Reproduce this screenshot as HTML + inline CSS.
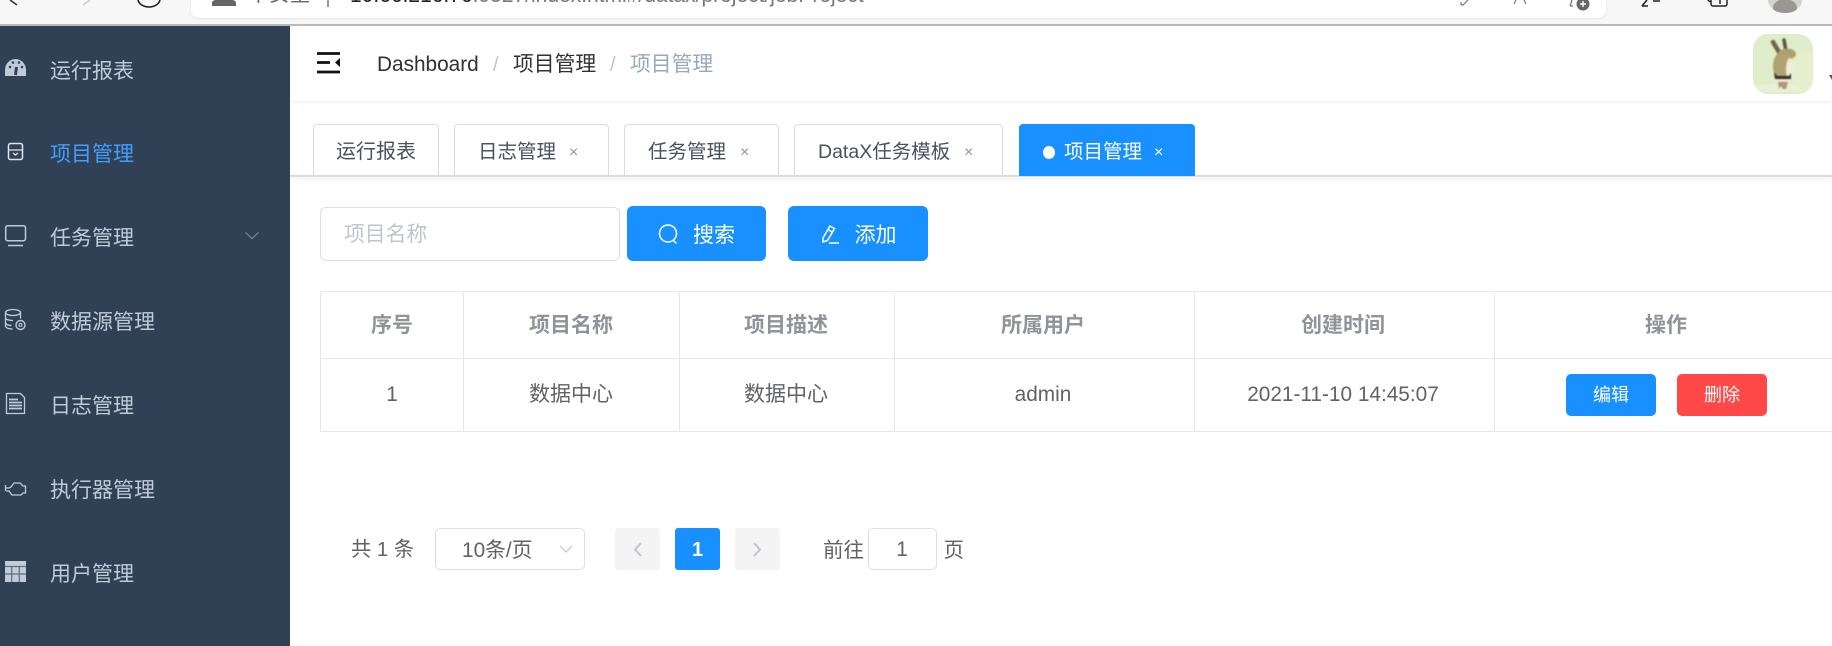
<!DOCTYPE html>
<html lang="zh"><head><meta charset="utf-8"><title>项目管理</title>
<style>
*{box-sizing:border-box}
html,body{margin:0;padding:0;width:1832px;height:646px;overflow:hidden;background:#fff}
body{position:relative;font-family:"Liberation Sans","Noto Sans CJK SC",sans-serif;font-size:21px;color:#606266}
.a,.t,.c{position:absolute;white-space:nowrap}
.t{line-height:30px;height:30px}
.c{line-height:30px;height:30px;text-align:center;transform:translateX(-50%)}
.m{color:#bfcbd9;left:50px}
.tab{position:absolute;top:124px;height:52px;background:#fff;border:1px solid #d8dce5;border-bottom:0;border-radius:4px 4px 0 0}
.tx{font-size:19.5px}
.x{color:#8f9399;font-size:16px}
.th{font-weight:bold;color:#909399;font-size:21px}
.vl{position:absolute;width:1px;top:292px;height:140px;background:#e4e7ed}
.btn{position:absolute;background:#1890ff;border-radius:4px}
svg{position:absolute;overflow:visible}
</style></head><body>

<!-- browser chrome -->
<div class="a" style="left:0;top:0;width:1832px;height:24px;background:#f7f7f7"></div>
<div class="a" style="left:0;top:24px;width:1832px;height:2px;background:#bcbcbc"></div>
<div class="a" style="left:191px;top:-10px;width:1415px;height:28px;background:#fff;border-radius:8px;box-shadow:0 1px 2px rgba(0,0,0,.08)"></div>
<svg style="left:0;top:0" width="1832" height="24" fill="none">
<path d="M10 0l7 5" stroke="#333" stroke-width="1.6"/>
<path d="M83 5l7-5" stroke="#ccc" stroke-width="1.6"/>
<path d="M138 -1a11 8 0 0 0 22 0" stroke="#222" stroke-width="1.6"/>
<path d="M212 6v-3c0-2 2-3 4-3h2l2-3h3l2 3h7c2 0 4 1 4 3v3z" fill="#666" stroke="none"/>
<path d="M328 -6v13" stroke="#777" stroke-width="1.5"/>
<path d="M1461 5h2l5-5M1461 5v-3" stroke="#777" stroke-width="1.2"/>
<path d="M1514 4l3-6M1526 4l-3-6" stroke="#777" stroke-width="1.2"/>
<path d="M1570 6h3M1570 6l2-6" stroke="#777" stroke-width="1.3"/>
<circle cx="1583" cy="4" r="6.500" fill="#666"/><path d="M1583 1v6M1580 4h6" stroke="#fff" stroke-width="1.4"/>
<path d="M1642 6l5-6M1642 6h6M1653 1h7" stroke="#222" stroke-width="1.6"/>
<path d="M1711 0v4a2 2 0 0 0 2 2h12a2 2 0 0 0 2-2v-4M1720 -1v5M1707 -1l3 3" stroke="#222" stroke-width="1.500"/>
<path d="M1768 0a17 13 0 0 0 34 0z" fill="#d3d3d0"/>
<path d="M1773 8a12 9 0 0 1 24 0a12 5 0 0 1-24 0z" fill="#9a9793"/>
</svg>
<div class="a" style="left:248px;top:-18px;font-size:20.800px;line-height:26px;color:#666">不安全</div>
<div class="a" style="left:350px;top:-17px;font-size:21px;line-height:26px;color:#777"><span style="color:#222">10.66.216.76</span>:9527/index.html#/datax/project/jobProject</div>

<!-- sidebar -->
<div class="a" style="left:0;top:26px;width:290px;height:620px;background:#304156"></div>
<div class="t m" style="top:57px">运行报表</div>
<div class="t m" style="top:140px;color:#409eff">项目管理</div>
<div class="t m" style="top:224px">任务管理</div>
<div class="t m" style="top:308px">数据源管理</div>
<div class="t m" style="top:392px">日志管理</div>
<div class="t m" style="top:476px">执行器管理</div>
<div class="t m" style="top:560px">用户管理</div>
<svg style="left:0;top:0" width="290" height="646" fill="none" stroke="#bfcbd9">
<!-- gauge -->
<path d="M5 76v-6a10.500 11 0 0 1 21 0v6z" fill="#bfcbd9" stroke="none"/>
<path d="M15.500 75l1-8" stroke="#304156" stroke-width="3"/>
<circle cx="10" cy="67" r="1.300" fill="#304156" stroke="none"/><circle cx="13" cy="62.500" r="1.300" fill="#304156" stroke="none"/><circle cx="19" cy="62.500" r="1.300" fill="#304156" stroke="none"/><circle cx="22" cy="67" r="1.300" fill="#304156" stroke="none"/>
<!-- box -->
<rect x="8.500" y="143.500" width="14" height="16" rx="2" stroke="#dfe5ec" stroke-width="1.500"/>
<path d="M9 150h13M13 153l2.500 2 2.500-2" stroke="#dfe5ec" stroke-width="1.300"/>
<!-- monitor -->
<rect x="5.700" y="225.700" width="19.800" height="15" rx="2" stroke-width="1.500"/>
<path d="M8 245.500h15" stroke-width="1.500"/>
<!-- db -->
<ellipse cx="13" cy="312.500" rx="7.500" ry="3" stroke-width="1.300"/>
<path d="M5.500 312.500v13.500c0 2 3.500 3 7 3M5.500 317.500c0 2 3.500 3 7.500 3M5.500 322.500c0 2 3 3 6 3M20.500 312.500v6" stroke-width="1.300"/>
<circle cx="20.500" cy="325" r="4.500" stroke-width="1.400"/><circle cx="20.500" cy="325" r="1.500" stroke-width="1.100"/>
<!-- doc -->
<path d="M6.500 393.500h14l4 4v16h-18z" stroke-width="1.300"/>
<path d="M9 399.500h9M9 402.500h13M9 405.500h13M9 408.500h13" stroke-width="1.700"/>
<!-- engine -->
<path d="M5.500 485v6M6 488h3l2-1 3-4h6l3 3h2.500v7h-2.500l-2 2h-9l-3-4h-3" stroke-width="1.300"/>
<!-- table -->
<path d="M5 561h21v21H5z" fill="#bfcbd9" stroke="none"/>
<path d="M5 566.500h21M5 574h21M11.700 566.500v15.500M19.300 566.500v15.500" stroke="#5f6f82" stroke-width="1.200"/>
<!-- chevron -->
<path d="M245.500 232.500l6.500 6 6.500-6" stroke="#7f8b99" stroke-width="1.100"/>
</svg>

<!-- header -->
<div class="a" style="left:290px;top:26px;width:1542px;height:75px;background:#fff;box-shadow:0 1px 4px rgba(0,21,41,.08)"></div>
<svg style="left:0;top:0" width="345" height="80">
<path d="M317 53.500h23M317 62.500h13M317 72h23" stroke="#111" stroke-width="2.800" fill="none"/>
<path d="M340 58v9l-5-4.500z" fill="#111"/>
</svg>
<div class="t" style="left:377px;top:50px;color:#303133;font-size:20.800px">Dashboard</div>
<div class="t" style="left:493px;top:50px;color:#c0c4cc;font-size:20px">/</div>
<div class="t" style="left:513px;top:50px;color:#303133;font-size:20.800px">项目管理</div>
<div class="t" style="left:610px;top:50px;color:#c0c4cc;font-size:20px">/</div>
<div class="t" style="left:630px;top:50px;color:#97a8be;font-size:20.800px">项目管理</div>
<!-- avatar -->
<div class="a" style="left:1753px;top:34px;width:60px;height:60px;border-radius:15px;background:#e0edca;overflow:hidden">
<svg style="left:0;top:0;filter:blur(.7px)" width="60" height="60">
<rect x="40" y="18" width="20" height="40" fill="#e7eecb"/>
<ellipse cx="24" cy="54" rx="22" ry="4" fill="#eaf0d8"/>
<path d="M20 8l6 10" stroke="#6b6448" stroke-width="4.500" stroke-linecap="round"/>
<path d="M31 6l2 11" stroke="#5a5440" stroke-width="3.500" stroke-linecap="round"/>
<ellipse cx="34" cy="20" rx="9" ry="5.500" fill="#ada06f"/>
<ellipse cx="30" cy="32" rx="10" ry="15" fill="#b0a270"/>
<ellipse cx="37" cy="35" rx="4" ry="11" fill="#efecd9"/>
<ellipse cx="30" cy="46" rx="11" ry="4" fill="#ece9d6"/>
<path d="M21 38l3 4h12l2-3v6H22z" fill="#2e2c24"/>
<path d="M25 48h10l-2 7h-3l-2-3-2 3z" fill="#a99a70"/>
</svg></div>
<svg style="left:1826px;top:74px" width="6" height="8"><path d="M3 1l3 0 0 5z" fill="#5c5340"/></svg>

<!-- tags -->
<div class="tab" style="left:313px;width:126px"></div>
<div class="tab" style="left:454px;width:155px"></div>
<div class="tab" style="left:624px;width:155px"></div>
<div class="tab" style="left:794px;width:209px"></div>
<div class="a" style="left:290px;top:175px;width:1542px;height:2px;background:#d8dce5;box-shadow:0 2px 5px rgba(0,0,0,.10)"></div>
<div class="tab" style="left:1019px;width:176px;background:#1890ff;border-color:#1890ff"></div>
<div class="t tx" style="left:336px;top:137px;color:#495060;font-size:20px">运行报表</div>
<div class="t tx" style="left:478px;top:137px;color:#495060">日志管理</div>
<div class="t x" style="left:569px;top:138px">×</div>
<div class="t tx" style="left:648px;top:137px;color:#495060">任务管理</div>
<div class="t x" style="left:740px;top:138px">×</div>
<div class="t tx" style="left:818px;top:137px;color:#495060">DataX任务模板</div>
<div class="t x" style="left:964px;top:138px">×</div>
<div class="a" style="left:1043px;top:146px;width:12px;height:13px;border-radius:50%;background:#fff"></div>
<div class="t tx" style="left:1064px;top:137px;color:#fff">项目管理</div>
<div class="t x" style="left:1154px;top:138px;color:#fff">×</div>

<!-- filter -->
<div class="a" style="left:320px;top:207px;width:300px;height:54px;background:#fff;border:1px solid #dcdfe6;border-radius:6px"></div>
<div class="t" style="left:344px;top:220px;color:#c0c4cc;font-size:20.800px">项目名称</div>
<div class="btn" style="left:627px;top:206px;width:139px;height:55px;border-radius:6px"></div>
<div class="btn" style="left:788px;top:206px;width:140px;height:55px;border-radius:6px"></div>
<svg style="left:0;top:0" width="930" height="262" fill="none" stroke="#fff" stroke-width="1.500">
<circle cx="668" cy="233.500" r="8.500"/><path d="M673 240l3.500 3.500"/>
<path d="M823 238l7-12 4.500 2.500-7 12-4.500 1.500zM829 243h10M828 229.500l4 2.500"/>
</svg>
<div class="t" style="left:693px;top:221px;color:#fff;font-size:21px">搜索</div>
<div class="t" style="left:854.500px;top:221px;color:#fff;font-size:21px">添加</div>

<!-- table -->
<div class="a" style="left:320px;top:291px;width:1512px;height:1px;background:#e4e7ed"></div>
<div class="a" style="left:320px;top:358px;width:1512px;height:1px;background:#e4e7ed"></div>
<div class="a" style="left:320px;top:431px;width:1512px;height:1px;background:#e4e7ed"></div>
<div class="vl" style="left:320px"></div>
<div class="vl" style="left:463px"></div>
<div class="vl" style="left:679px"></div>
<div class="vl" style="left:894px"></div>
<div class="vl" style="left:1194px"></div>
<div class="vl" style="left:1494px"></div>
<div class="c th" style="left:392px;top:311px">序号</div>
<div class="c th" style="left:571px;top:311px">项目名称</div>
<div class="c th" style="left:786px;top:311px">项目描述</div>
<div class="c th" style="left:1043px;top:311px">所属用户</div>
<div class="c th" style="left:1343px;top:311px">创建时间</div>
<div class="c th" style="left:1666px;top:311px">操作</div>
<div class="c" style="left:392px;top:380px;font-size:20.800px">1</div>
<div class="c" style="left:571px;top:380px;font-size:21px">数据中心</div>
<div class="c" style="left:786px;top:380px;font-size:21px">数据中心</div>
<div class="c" style="left:1043px;top:380px;font-size:20.800px">admin</div>
<div class="c" style="left:1343px;top:380px;font-size:20.800px">2021-11-10 14:45:07</div>
<div class="btn" style="left:1566px;top:374px;width:90px;height:42px;border-radius:5px"></div>
<div class="btn" style="left:1677px;top:374px;width:90px;height:42px;border-radius:5px;background:#ff4949"></div>
<div class="c" style="left:1611px;top:380px;color:#fff;font-size:18px">编辑</div>
<div class="c" style="left:1722px;top:380px;color:#fff;font-size:18px">删除</div>

<!-- pagination -->
<div class="t" style="left:351px;top:535px;font-size:20.300px">共 1 条</div>
<div class="a" style="left:435px;top:528px;width:150px;height:42px;border:1px solid #dcdfe6;border-radius:5px"></div>
<div class="t" style="left:462px;top:536px;font-size:20.800px">10条/页</div>
<div class="a" style="left:615px;top:528px;width:45px;height:42px;background:#f4f4f5;border-radius:3px"></div>
<div class="a" style="left:675px;top:528px;width:45px;height:42px;background:#1890ff;border-radius:3px"></div>
<div class="a" style="left:735px;top:528px;width:45px;height:42px;background:#f4f4f5;border-radius:3px"></div>
<div class="c" style="left:697.500px;top:535px;color:#fff;font-weight:bold;font-size:20px">1</div>
<svg style="left:0;top:0" width="800" height="600" fill="none">
<path d="M560 546l6 6 6-6" stroke="#c0c4cc" stroke-width="1.200"/>
<path d="M641 543l-6 6.500 6 6.500" stroke="#c0c4cc" stroke-width="2"/>
<path d="M754 543l6 6.500-6 6.500" stroke="#c0c4cc" stroke-width="2"/>
</svg>
<div class="t" style="left:823px;top:536px;font-size:20.500px">前往</div>
<div class="a" style="left:868px;top:528px;width:69px;height:42px;border:1px solid #dcdfe6;border-radius:5px"></div>
<div class="c" style="left:902px;top:535px;font-size:20.800px">1</div>
<div class="t" style="left:943.500px;top:536px;font-size:20.500px">页</div>
</body></html>
